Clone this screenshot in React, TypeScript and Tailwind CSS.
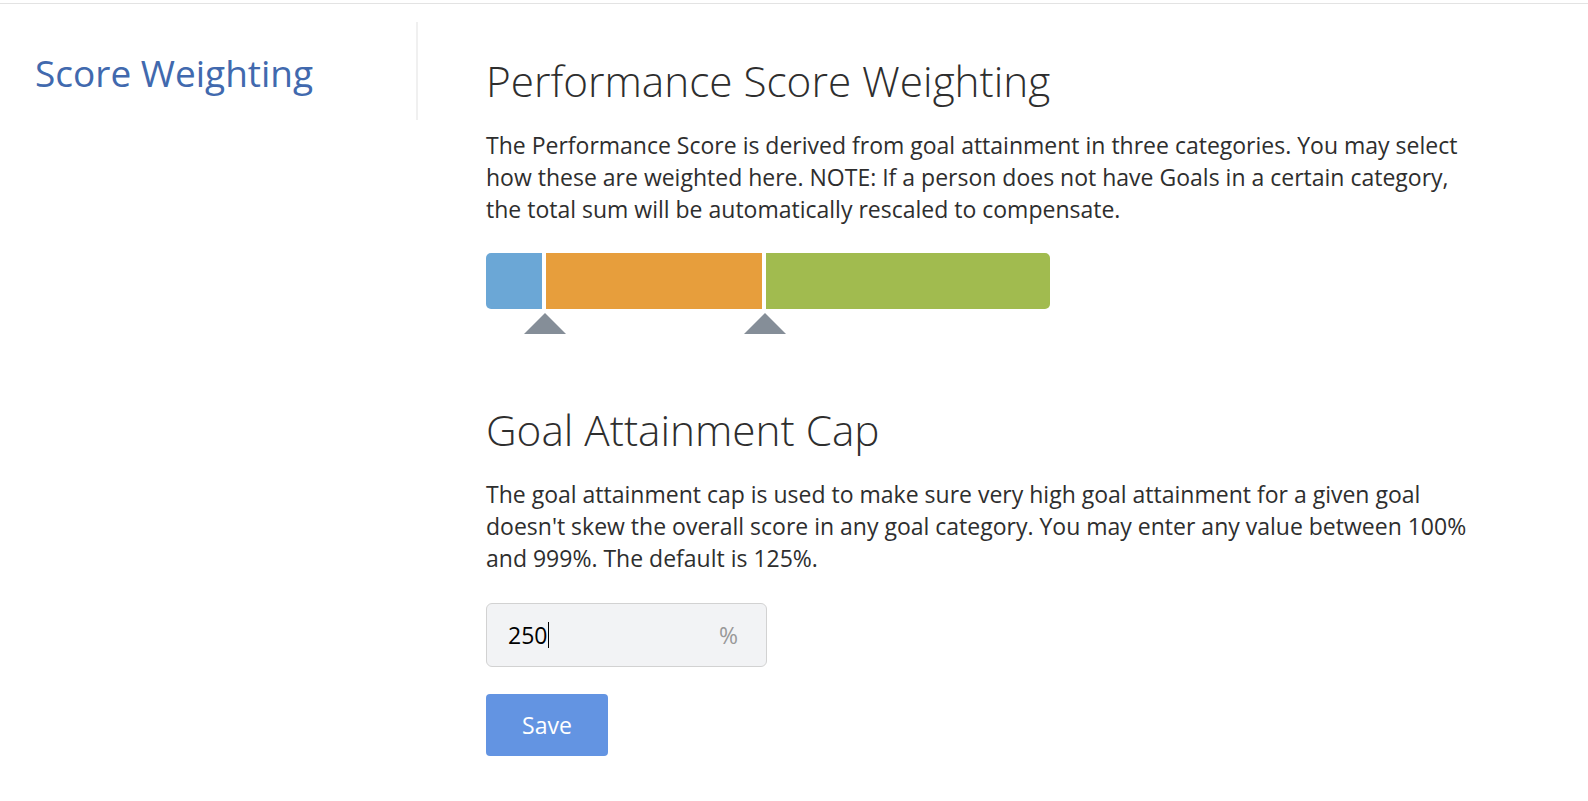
import React from "react";

export default function App() {
  return (
    <div className="min-h-screen bg-white text-[#333]" style={{ fontFamily: '"Open Sans", "Noto Sans", sans-serif' }}>
      <div className="h-[3px]" />
      <div className="border-t border-[#e3e3e3] flex">
        <aside className="w-[418px] shrink-0 pt-[18px]">
          <div className="border-r-2 border-[#f0f0f0] h-[98px] pl-[35px] pt-[29px]">
            <h2 className="text-[37px] leading-[1.2] text-[#4169ae] font-normal">Score Weighting</h2>
          </div>
        </aside>
        <main className="pl-[68px] pt-[52px] w-[1058px]">
          <h1 className="text-[42.3px] leading-[50px] font-light text-[#2e2e2e]">Performance Score Weighting</h1>
          <p className="mt-[23px] text-[23px] leading-[32px] text-[#2e2e2e]">
            The Performance Score is derived from goal attainment in three categories. You may select how these are weighted here. NOTE: If a person does not have Goals in a certain category, the total sum will be automatically rescaled to compensate.
          </p>
          <div className="mt-[28px] w-[564px]">
            <div className="flex h-[56px] gap-[4px]">
              <div className="w-[56px] bg-[#6ba7d6] rounded-l-[5px]" />
              <div className="w-[216px] bg-[#e79e3c]" />
              <div className="flex-1 bg-[#a1bb4f] rounded-r-[5px]" />
            </div>
            <div className="relative h-[26px]">
              <div className="absolute top-[4px] left-[38px] w-0 h-0 border-l-[21px] border-r-[21px] border-b-[21px] border-l-transparent border-r-transparent border-b-[#858e98]" />
              <div className="absolute top-[4px] left-[258px] w-0 h-0 border-l-[21px] border-r-[21px] border-b-[21px] border-l-transparent border-r-transparent border-b-[#858e98]" />
            </div>
          </div>
          <h1 className="mt-[70px] text-[42.3px] leading-[50px] font-light text-[#2e2e2e]">Goal Attainment Cap</h1>
          <p className="mt-[23px] text-[23px] leading-[32px] text-[#2e2e2e]">
            The goal attainment cap is used to make sure very high goal attainment for a given goal doesn't skew the overall score in any goal category. You may enter any value between 100% and 999%. The default is 125%.
          </p>
          <div className="mt-[29px] w-[281px] h-[64px] rounded-[6px] border border-[#d2d2d2] bg-[#f2f3f5] flex items-center pl-[21px] pr-[28px]">
            <span className="text-[23px] text-black leading-none">250</span>
            <span className="w-px h-[26px] bg-black ml-[1px]" />
            <span className="ml-auto text-[23px] text-[#999] leading-none">%</span>
          </div>
          <button className="mt-[27px] w-[122px] h-[62px] rounded-[4px] bg-[#6394e2] text-white text-[23px]">Save</button>
        </main>
      </div>
    </div>
  );
}
